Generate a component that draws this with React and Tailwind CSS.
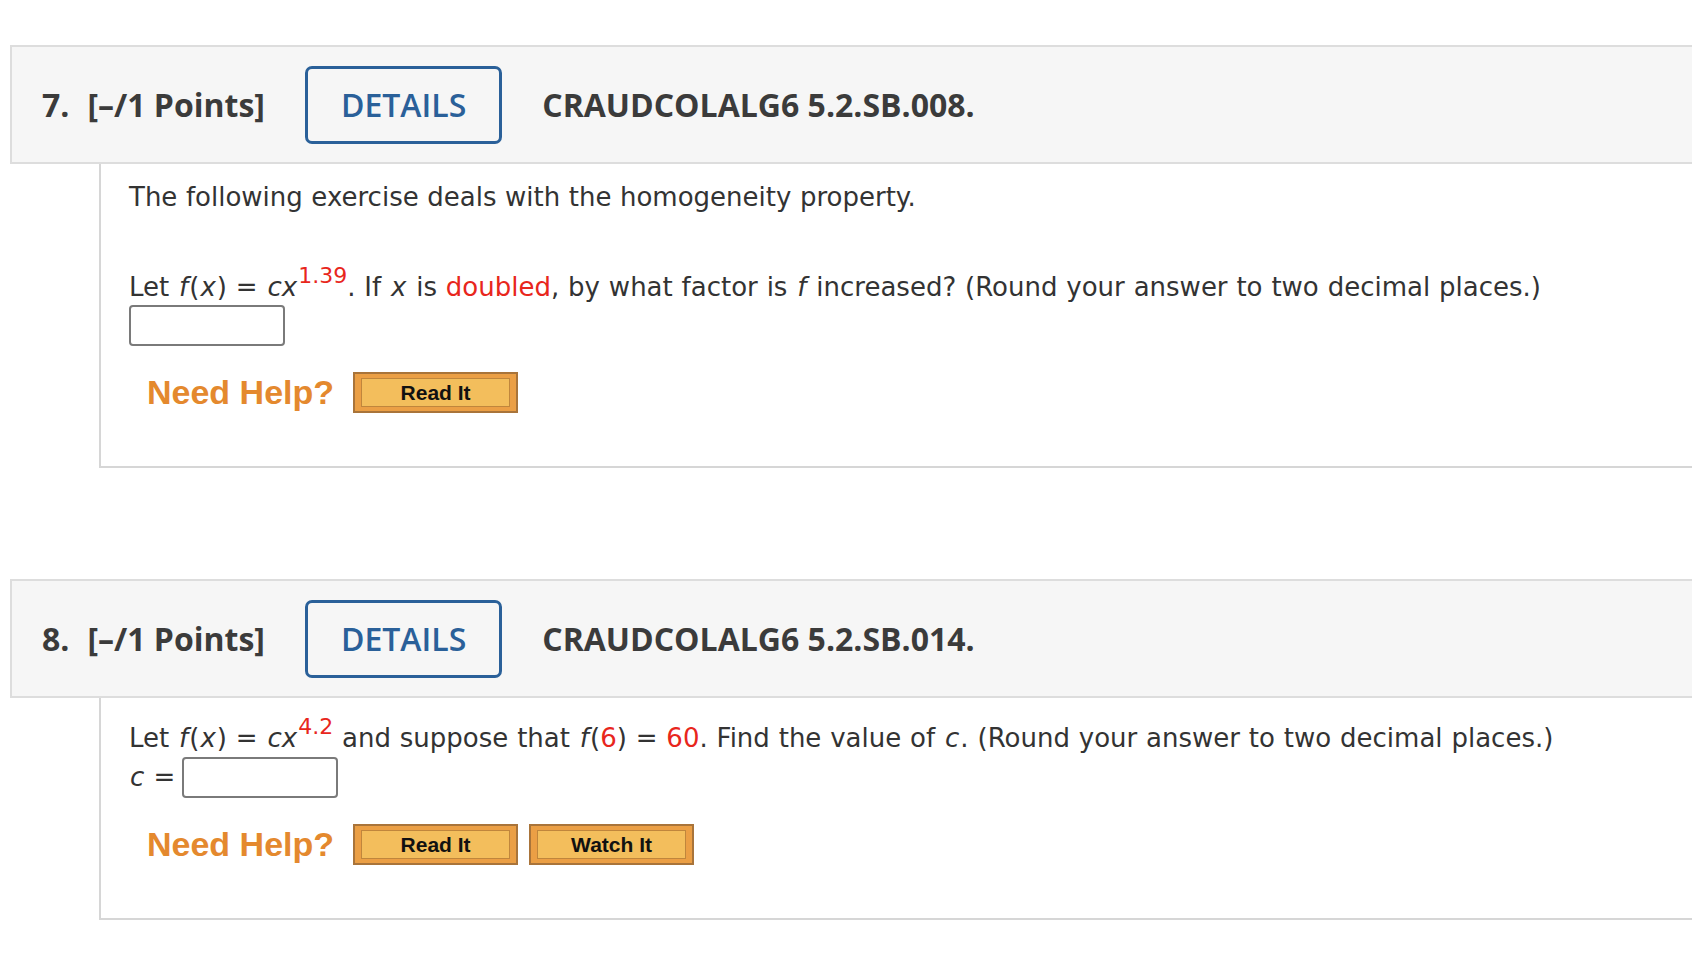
import React from "react";

const body = { fontFamily: '"DejaVu Sans", Verdana, sans-serif' };
const head = { fontFamily: '"Open Sans", "Noto Sans", sans-serif' };
const help = { fontFamily: '"Liberation Sans", Arial, sans-serif' };

// italic math variable, Verdana italics run a bit wider than DejaVu
function V({ children }) {
  return <i className="mx-[1px]">{children}</i>;
}

function Red({ children }) {
  return <span className="text-[#e8261c]">{children}</span>;
}

export default function App() {
  return (
    <div className="min-h-screen bg-white pt-[45px] pl-[10px] overflow-hidden">
      <Question num="7." code="CRAUDCOLALG6 5.2.SB.008." padTop="pt-[18px]">
        <p className="leading-[30px] [word-spacing:0.3px]">
          The following exercise deals with the homogeneity property.
        </p>
        <p className="leading-[30px] mt-[60px] [word-spacing:0.6px]">
          Let <V>f</V>(<V>x</V>) = <V>cx</V>
          <sup className="text-[22px] top-[-13px] text-[#e8261c]">1.39</sup>. If{" "}
          <V>x</V> is <Red>doubled</Red>, by what factor is <V>f</V> increased?
          (Round your answer to two decimal places.)
        </p>
        <div className="mt-[3px] w-[156px] h-[41px] border-2 border-[#7a7a7a] rounded-[4px] bg-white" />
        <HelpRow buttons={["Read It"]} />
      </Question>

      <div className="h-[111px]" />

      <Question num="8." code="CRAUDCOLALG6 5.2.SB.014." padTop="pt-[25px]">
        <p className="leading-[30px] [word-spacing:0.6px]">
          Let <V>f</V>(<V>x</V>) = <V>cx</V>
          <sup className="text-[22px] top-[-13px] text-[#e8261c]">4.2</sup> and
          suppose that <V>f</V>(<Red>6</Red>) = <Red>60</Red>. Find the value of{" "}
          <V>c</V>. (Round your answer to two decimal places.)
        </p>
        <div className="mt-[4px] flex items-center">
          <span>
            <V>c</V> =
          </span>
          <div className="ml-[7px] w-[156px] h-[41px] border-2 border-[#7a7a7a] rounded-[4px] bg-white" />
        </div>
        <HelpRow buttons={["Read It", "Watch It"]} />
      </Question>
    </div>
  );
}

/* ---------------- QUESTION BLOCK ---------------- */

function Question({ num, code, padTop, children }) {
  return (
    <div>
      <div
        style={head}
        className="h-[119px] flex items-center bg-[#f6f6f6] border-2 border-r-0 border-[#dddddd] pl-[30px] text-[32px] text-[#3b3b3b]"
      >
        <span className="font-bold">{num}</span>
        <span className="font-bold ml-[18px]">[–/1 Points]</span>
        <div className="ml-[40px] h-[78px] px-[33px] flex items-center border-[3px] border-[#2a6099] rounded-[7px] text-[#2a6099] font-semibold">
          DETAILS
        </div>
        <span className="font-bold ml-[40px]">{code}</span>
      </div>
      <div
        style={body}
        className={`ml-[89px] border-l-2 border-b-2 border-[#d6d6d6] pl-[28px] pb-[48px] text-[26px] text-[#333333] ${padTop}`}
      >
        {children}
      </div>
    </div>
  );
}

function HelpRow({ buttons }) {
  return (
    <div style={help} className="mt-[21px] flex items-center pl-[18px]">
      <span className="text-[34px] font-bold text-[#e4892e] mr-[19px]">
        Need Help?
      </span>
      <div className="flex gap-[11px]">
        {buttons.map((b) => (
          <div
            key={b}
            className="w-[165px] h-[41px] border-2 border-[#a9743a] bg-[#eb9f45] px-[6px] py-[4px]"
          >
            <div className="h-full flex items-center justify-center border border-[#c0863c] bg-[#f3be5c] text-[21px] font-bold text-[#111111]">
              {b}
            </div>
          </div>
        ))}
      </div>
    </div>
  );
}
